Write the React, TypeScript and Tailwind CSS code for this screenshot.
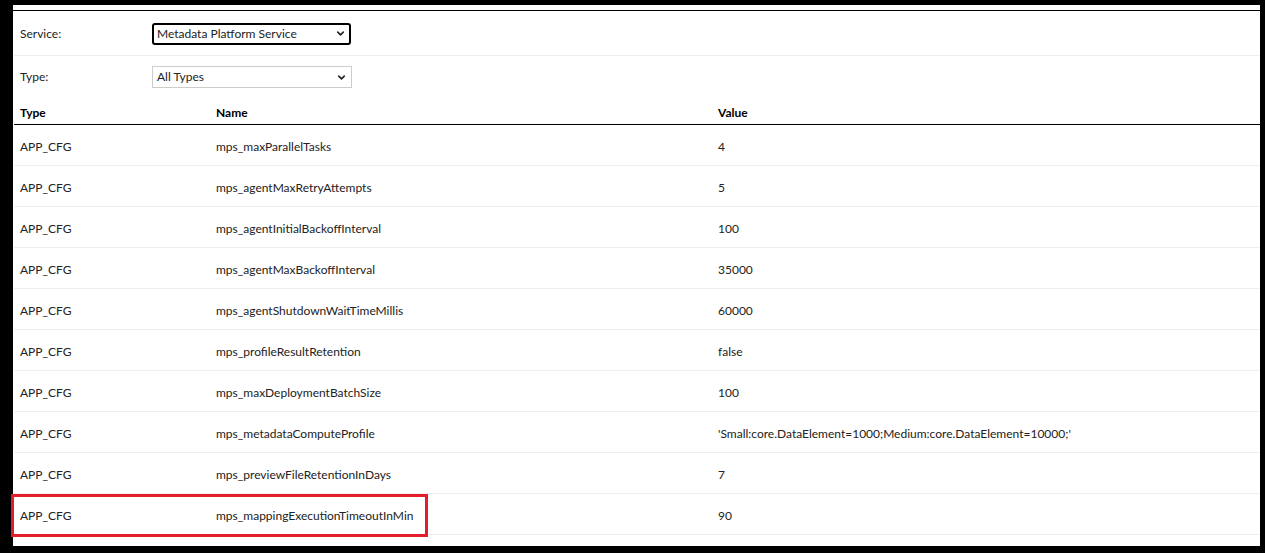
import React from 'react';
import { ChevronDown } from 'lucide-react';

const rows: Array<[string, string, string]> = [
  ['APP_CFG', 'mps_maxParallelTasks', '4'],
  ['APP_CFG', 'mps_agentMaxRetryAttempts', '5'],
  ['APP_CFG', 'mps_agentInitialBackoffInterval', '100'],
  ['APP_CFG', 'mps_agentMaxBackoffInterval', '35000'],
  ['APP_CFG', 'mps_agentShutdownWaitTimeMillis', '60000'],
  ['APP_CFG', 'mps_profileResultRetention', 'false'],
  ['APP_CFG', 'mps_maxDeploymentBatchSize', '100'],
  ['APP_CFG', 'mps_metadataComputeProfile', "'Small:core.DataElement=1000;Medium:core.DataElement=10000;'"],
  ['APP_CFG', 'mps_previewFileRetentionInDays', '7'],
  ['APP_CFG', 'mps_mappingExecutionTimeoutInMin', '90'],
];

const App = () => {
  return (
    <div className="w-[1265px] h-[553px] bg-black pt-[5px] pl-[13px] pr-[5px] pb-[7px] font-['Lato',Arial,sans-serif] text-[12px] text-[#222]">
      <div className="bg-white h-full pt-[5px] flex flex-col">
        <div className="border-t border-black" />

        {/* filters */}
        <div className="flex items-center h-[45px] pt-[1px] border-b border-[#eeeeee] ml-[1px]">
          <div className="w-[138px] pl-[6px]">Service:</div>
          <div className="w-[199px] h-[22px] border-2 border-black rounded-[3px] flex items-center justify-between pl-[3px] pr-[3px]">
            <span>Metadata Platform Service</span>
            <ChevronDown size={11} strokeWidth={3.5} />
          </div>
        </div>
        <div className="flex items-center h-[42px] ml-[1px]">
          <div className="w-[138px] pl-[6px]">Type:</div>
          <div className="w-[200px] h-[22px] border border-[#cccccc] flex items-center justify-between pl-[4px] pr-[4px]">
            <span>All Types</span>
            <ChevronDown size={11} strokeWidth={3.5} />
          </div>
        </div>

        {/* table header */}
        <div className="flex items-center h-[27px] pt-[4px] border-b border-black font-bold text-black ml-[1px]">
          <div className="w-[202px] pl-[6px]">Type</div>
          <div className="w-[502px]">Name</div>
          <div className="flex-1">Value</div>
        </div>

        {rows.map(([type, name, value], i) => (
          <div
            key={name}
            className="relative flex items-center h-[41px] pt-[3px] border-b border-[#eeeeee] ml-[1px]"
          >
            <div className="w-[202px] pl-[6px]">{type}</div>
            <div className="w-[502px]">{name}</div>
            <div className="flex-1">{value}</div>
            {i === rows.length - 1 && (
              <div className="absolute left-[-3px] top-[0px] w-[417px] h-[43px] border-[3px] border-[#e31e2a] pointer-events-none" />
            )}
          </div>
        ))}
      </div>
    </div>
  );
};

export default App;
